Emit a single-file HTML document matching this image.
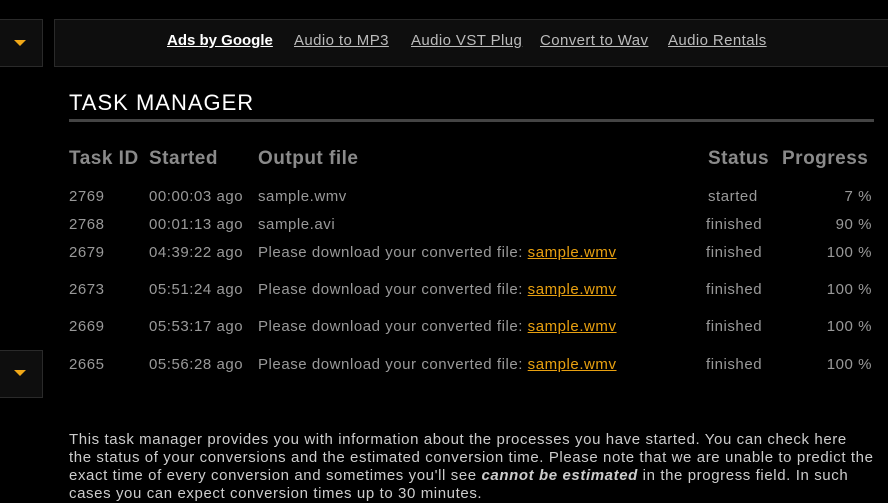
<!DOCTYPE html>
<html><head><style>
body{margin:0;width:888px;height:500px;background:#000;overflow:hidden;font-family:"Liberation Sans",Arial,sans-serif;position:relative}
.a{position:absolute;white-space:nowrap}
.box{position:absolute;background:#0e0e0e;border:1px solid #2a2a2a}
.tri{position:absolute;width:0;height:0;border-left:6px solid transparent;border-right:6px solid transparent;border-top:6px solid #f0a818}
.ad{color:#bbb;font-size:15px;text-decoration:underline;top:32px;letter-spacing:0.4px}
.h{color:#8a8a8a;font-size:19px;font-weight:bold;top:148px;letter-spacing:0.5px}
.r{color:#999;font-size:15px;letter-spacing:0.55px}
.r a{color:#e8a010;text-decoration:underline}
.p{color:#ccc;font-size:15px;line-height:18px;left:69px;top:431px;letter-spacing:0.6px}
</style></head><body>
<div class="box" style="left:-2px;top:19px;width:43px;height:46px"></div>
<div class="tri" style="left:14px;top:40px"></div>
<div class="box" style="left:54px;top:19px;width:840px;height:46px"></div>
<div class="a ad" style="left:167px;color:#fff;font-weight:bold;letter-spacing:0">Ads by Google</div>
<div class="a ad" style="left:294px">Audio to MP3</div>
<div class="a ad" style="left:411px">Audio VST Plug</div>
<div class="a ad" style="left:540px">Convert to Wav</div>
<div class="a ad" style="left:668px">Audio Rentals</div>
<div class="box" style="left:-2px;top:350px;width:43px;height:46px"></div>
<div class="tri" style="left:14px;top:370px"></div>
<div class="a" style="left:69px;top:90px;color:#fff;font-size:22px;letter-spacing:1px">TASK MANAGER</div>
<div class="a" style="left:69px;top:119px;width:805px;height:3px;background:#444"></div>
<div class="a h" style="left:69px">Task ID</div>
<div class="a h" style="left:149px">Started</div>
<div class="a h" style="left:258px">Output file</div>
<div class="a h" style="left:708px">Status</div>
<div class="a h" style="left:782px">Progress</div>
<div class="a r" style="left:69px;top:188px">2769</div><div class="a r" style="left:149px;top:188px">00:00:03 ago</div><div class="a r" style="left:258px;top:188px">sample.wmv</div><div class="a r" style="left:708px;top:188px">started</div><div class="a r" style="right:16px;top:188px">7 %</div>
<div class="a r" style="left:69px;top:216px">2768</div><div class="a r" style="left:149px;top:216px">00:01:13 ago</div><div class="a r" style="left:258px;top:216px">sample.avi</div><div class="a r" style="left:706px;top:216px">finished</div><div class="a r" style="right:16px;top:216px">90 %</div>
<div class="a r" style="left:69px;top:244px">2679</div><div class="a r" style="left:149px;top:244px">04:39:22 ago</div><div class="a r" style="left:258px;top:244px">Please download your converted file: <a>sample.wmv</a></div><div class="a r" style="left:706px;top:244px">finished</div><div class="a r" style="right:16px;top:244px">100 %</div>
<div class="a r" style="left:69px;top:281px">2673</div><div class="a r" style="left:149px;top:281px">05:51:24 ago</div><div class="a r" style="left:258px;top:281px">Please download your converted file: <a>sample.wmv</a></div><div class="a r" style="left:706px;top:281px">finished</div><div class="a r" style="right:16px;top:281px">100 %</div>
<div class="a r" style="left:69px;top:318px">2669</div><div class="a r" style="left:149px;top:318px">05:53:17 ago</div><div class="a r" style="left:258px;top:318px">Please download your converted file: <a>sample.wmv</a></div><div class="a r" style="left:706px;top:318px">finished</div><div class="a r" style="right:16px;top:318px">100 %</div>
<div class="a r" style="left:69px;top:356px">2665</div><div class="a r" style="left:149px;top:356px">05:56:28 ago</div><div class="a r" style="left:258px;top:356px">Please download your converted file: <a>sample.wmv</a></div><div class="a r" style="left:706px;top:356px">finished</div><div class="a r" style="right:16px;top:356px">100 %</div>
<div class="a p">This task manager provides you with information about the processes you have started. You can check here<br>the status of your conversions and the estimated conversion time. Please note that we are unable to predict the<br>exact time of every conversion and sometimes you'll see <b><i>cannot be estimated</i></b> in the progress field. In such<br>cases you can expect conversion times up to 30 minutes.</div>
</body></html>
